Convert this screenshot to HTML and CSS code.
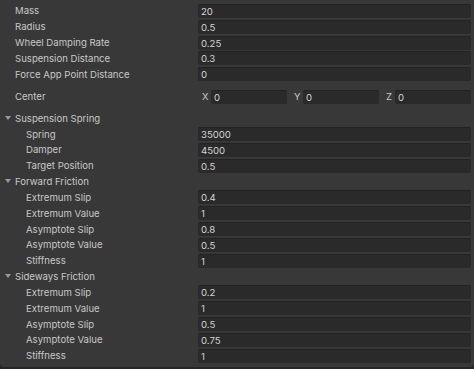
FILE: index.html
```html
<!DOCTYPE html>
<html lang="en">
<head>
    <meta charset="UTF-8">
    <title>Wheel Collider</title>
    <link rel="stylesheet" href="styles.css">
</head>
<body>
    <div class="panel">
        <div class="row"><span class="label">Mass</span><span class="field">20</span></div>
        <div class="row"><span class="label">Radius</span><span class="field">0.5</span></div>
        <div class="row"><span class="label">Wheel Damping Rate</span><span class="field">0.25</span></div>
        <div class="row"><span class="label">Suspension Distance</span><span class="field">0.3</span></div>
        <div class="row"><span class="label">Force App Point Distance</span><span class="field">0</span></div>

        <div class="row center-row">
            <span class="label">Center</span>
            <div class="vector">
                <div class="axis"><span class="axis-name">X</span><span class="field">0</span></div>
                <div class="axis"><span class="axis-name">Y</span><span class="field">0</span></div>
                <div class="axis"><span class="axis-name">Z</span><span class="field">0</span></div>
            </div>
        </div>

        <div class="row foldout first-foldout"><span class="label"><i class="arrow"></i>Suspension Spring</span></div>
        <div class="row sub"><span class="label">Spring</span><span class="field">35000</span></div>
        <div class="row sub"><span class="label">Damper</span><span class="field">4500</span></div>
        <div class="row sub"><span class="label">Target Position</span><span class="field">0.5</span></div>

        <div class="row foldout"><span class="label"><i class="arrow"></i>Forward Friction</span></div>
        <div class="row sub"><span class="label">Extremum Slip</span><span class="field">0.4</span></div>
        <div class="row sub"><span class="label">Extremum Value</span><span class="field">1</span></div>
        <div class="row sub"><span class="label">Asymptote Slip</span><span class="field">0.8</span></div>
        <div class="row sub"><span class="label">Asymptote Value</span><span class="field">0.5</span></div>
        <div class="row sub"><span class="label">Stiffness</span><span class="field">1</span></div>

        <div class="row foldout"><span class="label"><i class="arrow"></i>Sideways Friction</span></div>
        <div class="row sub"><span class="label">Extremum Slip</span><span class="field">0.2</span></div>
        <div class="row sub"><span class="label">Extremum Value</span><span class="field">1</span></div>
        <div class="row sub"><span class="label">Asymptote Slip</span><span class="field">0.5</span></div>
        <div class="row sub"><span class="label">Asymptote Value</span><span class="field">0.75</span></div>
        <div class="row sub"><span class="label">Stiffness</span><span class="field">1</span></div>
    </div>
</body>
</html>
```

FILE: styles.css
```css
body {
    margin: 0;
    background-color: #262626;
    font-family: Inter, "Liberation Sans", sans-serif;
    font-size: 9.6px;
    color: #c8c8c8;
}
.panel {
    height: 367px;
    padding-top: 3px;
    box-sizing: border-box;
    background-color: #383838;
    border-bottom-left-radius: 4px;
    border-bottom-right-radius: 4px;
}
.row {
    display: grid;
    grid-template-columns: 198px 1fr;
    align-items: center;
    height: 15.85px;
    padding-right: 3px;
}
.label {
    padding-left: 15px;
    white-space: nowrap;
}
.sub .label {
    padding-left: 26px;
}
.field {
    display: block;
    height: 14px;
    line-height: 13px;
    padding-left: 3px;
    background-color: #2a2a2a;
    border-top: 1px solid #222222;
    border-radius: 2px;
    box-sizing: border-box;
    color: #d4d4d4;
}
.center-row {
    margin-top: 6.7px;
}
.vector {
    display: flex;
    gap: 7px;
    margin-left: 4px;
}
.axis {
    flex: 1;
    display: flex;
    align-items: center;
}
.axis-name {
    width: 9px;
    flex-shrink: 0;
}
.axis .field {
    flex: 1;
}
.first-foldout {
    margin-top: 5.5px;
}
.foldout .label {
    position: relative;
    padding-left: 15px;
}
.arrow {
    position: absolute;
    left: 5px;
    top: 3px;
    width: 0;
    height: 0;
    border-left: 3px solid transparent;
    border-right: 3px solid transparent;
    border-top: 4px solid #9a9a9a;
}
```
